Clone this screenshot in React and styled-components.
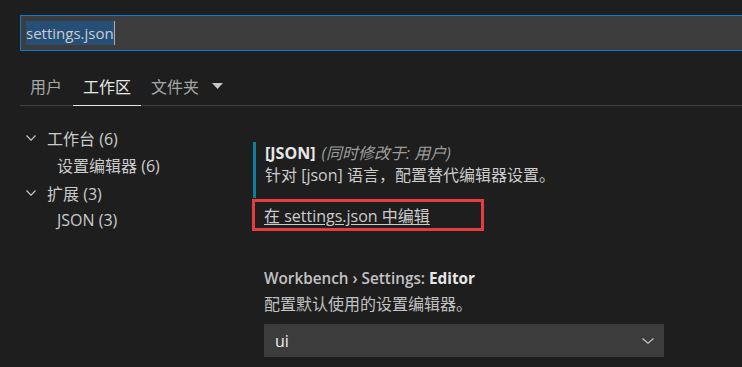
import React from "react";
import styled, { createGlobalStyle } from "styled-components";

const Global = createGlobalStyle`
  html, body { margin: 0; padding: 0; background: #1e1e1e; overflow: hidden; }
  body {
    font-family: "Segoe UI", "Open Sans", "Noto Sans CJK SC", sans-serif;
    color: #cccccc;
  }
`;

const Page = styled.div`
  width: 742px;
  height: 367px;
  padding: 15px 0 0 20px;
  box-sizing: border-box;
  overflow: hidden;
`;

const SearchBox = styled.div`
  width: 760px;
  height: 36px;
  box-sizing: border-box;
  border: 1px solid #007fd4;
  background: #3c3c3c;
  display: flex;
  align-items: center;
  padding-left: 5px;
  font-size: 15px;
`;

const Selected = styled.span`
  background: #264f78;
  color: #cccccc;
  line-height: 24px;
  height: 24px;
  display: inline-block;
`;

const Caret = styled.span`
  width: 1px;
  height: 24px;
  background: #aeafad;
`;

const TabBar = styled.div`
  margin-top: 16px;
  width: 760px;
  display: flex;
  align-items: stretch;
  border-bottom: 1px solid #414141;
  height: 38px;
`;

const Tab = styled.div`
  padding: 0 10px;
  margin-right: ${(p) => (p.$gap ? "1px" : "0")};
  display: flex;
  align-items: center;
  font-size: 16px;
  color: ${(p) => (p.$active ? "#e7e7e7" : "#a6a6a6")};
  border-bottom: 1px solid ${(p) => (p.$active ? "#e7e7e7" : "transparent")};
  margin-bottom: -1px;
  font-family: "Noto Sans CJK SC", sans-serif;
`;

const Caret2 = styled.svg`
  margin-left: 3px;
  align-self: center;
`;

const Body = styled.div`
  display: flex;
  padding-top: 18px;
`;

const Tree = styled.div`
  width: 233px;
  display: flex;
  flex-direction: column;
`;

const TreeRow = styled.div`
  height: 27.5px;
  display: flex;
  align-items: center;
  padding-left: ${(p) => (p.$child ? "37px" : "6px")};
  font-size: 16px;
  color: #cccccc;
  gap: 11px;
  white-space: nowrap;
`;

const Content = styled.div`
  display: flex;
  flex-direction: column;
  padding-top: 18px;
`;

const Override = styled.div`
  border-left: 3px solid #0c7d9d;
  padding: 0 0 12px 9px;
  font-size: 16px;
`;

const Line = styled.div`
  line-height: 22px;
  white-space: nowrap;
`;

const Bold = styled.span`
  font-weight: 700;
  color: #e7e7e7;
`;

const Note = styled.span`
  font-style: italic;
  color: #9d9d9d;
  margin-left: 6px;
`;

const LinkBox = styled.div`
  margin: 1px 0 0 -1px;
  width: 232px;
  height: 32px;
  box-sizing: border-box;
  border: 3px solid #e83b3b;
  padding-left: 9px;
  display: flex;
  align-items: center;
`;

const Link = styled.a`
  color: #cccccc;
  text-decoration: underline;
  text-underline-offset: 2px;
  font-size: 16px;
  white-space: nowrap;
`;

const Setting = styled.div`
  margin-top: 35px;
  padding-left: 11px;
  display: flex;
  flex-direction: column;
`;

const Title = styled.div`
  line-height: 24px;
  font-size: 15.3px;
  font-weight: 600;
  color: #c2c2c2;
  white-space: nowrap;
`;

const TitleKey = styled.span`
  font-weight: 700;
  color: #e7e7e7;
`;

const Desc = styled.div`
  margin-top: 2px;
  line-height: 24px;
  font-size: 16px;
  color: #c2c2c2;
  white-space: nowrap;
`;

const Select = styled.div`
  margin-top: 8px;
  width: 400px;
  height: 33px;
  background: #3c3c3c;
  display: flex;
  align-items: center;
  justify-content: space-between;
  padding: 0 10px 0 11px;
  box-sizing: border-box;
  font-size: 16px;
  color: #f0f0f0;
`;

const Chevron = ({ w = 10, h = 6 }) => (
  <svg width={w} height={h} viewBox={`0 0 ${w} ${h}`} fill="none">
    <path d={`M0.5 0.5 L${w / 2} ${h - 0.8} L${w - 0.5} 0.5`} stroke="#c5c5c5" strokeWidth="1.2" />
  </svg>
);

export default function App() {
  return (
    <>
      <Global />
      <Page>
        <SearchBox>
          <Selected>settings.json</Selected>
          <Caret />
        </SearchBox>
        <TabBar>
          <Tab $gap>用户</Tab>
          <Tab $active>工作区</Tab>
          <Tab>文件夹</Tab>
          <Caret2 width="11" height="6" viewBox="0 0 11 6">
            <path d="M0 0 H11 L5.5 6 Z" fill="#c5c5c5" />
          </Caret2>
        </TabBar>
        <Body>
          <Tree>
            <TreeRow>
              <Chevron />
              <span>工作台 (6)</span>
            </TreeRow>
            <TreeRow $child>设置编辑器 (6)</TreeRow>
            <TreeRow>
              <Chevron />
              <span>扩展 (3)</span>
            </TreeRow>
            <TreeRow $child>JSON (3)</TreeRow>
          </Tree>
          <Content>
            <Override>
              <Line>
                <Bold>[JSON]</Bold>
                <Note>(同时修改于: 用户)</Note>
              </Line>
              <Line>针对 [json] 语言，配置替代编辑器设置。</Line>
            </Override>
            <LinkBox>
              <Link>在 settings.json 中编辑</Link>
            </LinkBox>
            <Setting>
              <Title>
                Workbench › Settings: <TitleKey>Editor</TitleKey>
              </Title>
              <Desc>配置默认使用的设置编辑器。</Desc>
              <Select>
                <span>ui</span>
                <Chevron w={12} h={6} />
              </Select>
            </Setting>
          </Content>
        </Body>
      </Page>
    </>
  );
}
